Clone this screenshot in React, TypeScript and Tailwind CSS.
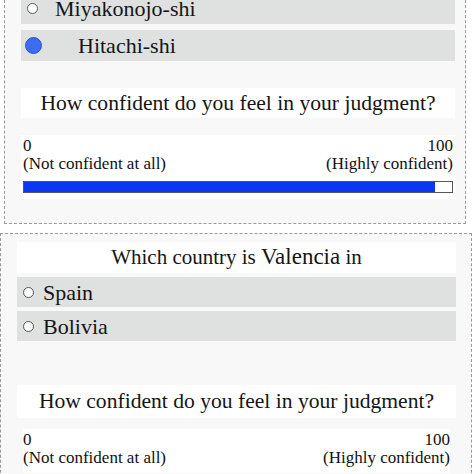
import React from 'react';

const serif = { fontFamily: '"Liberation Serif", "DejaVu Serif", serif' };

const Radio: React.FC<{ checked?: boolean }> = ({ checked }) =>
  checked ? (
    <span className="block w-[17px] h-[17px] rounded-full bg-[#3c6cf2] border border-[#2f55c8] shrink-0" />
  ) : (
    <span className="block w-[11px] h-[11px] rounded-full bg-white border border-[#555] shrink-0" />
  );

const Scale: React.FC<{ showBar?: boolean }> = ({ showBar }) => (
  <div className="bg-white pt-[2px] pb-[6px]">
    <div className="flex justify-between text-[17px] leading-[18px] text-[#111]">
      <div>
        <div>0</div>
        <div>(Not confident at all)</div>
      </div>
      <div className="text-right">
        <div>100</div>
        <div>(Highly confident)</div>
      </div>
    </div>
    {showBar && (
      <div className="mt-[8px] h-[12px] border border-[#555] bg-white flex">
        <div className="h-full bg-[#0a37f3] w-[96%]" />
      </div>
    )}
  </div>
);

export default function App() {
  return (
    <div className="w-[474px] h-[474px] overflow-hidden bg-white text-[#151515]" style={serif}>
      {/* first question, scrolled partly out of view */}
      <div className="ml-[4px] w-[462px] h-[224px] border border-dashed border-[#9a9a9a] border-t-0 bg-[#f8f8f8] pl-4 pr-[10px] overflow-hidden">
        <div className="-mt-[7px] flex flex-col gap-[6px]">
          <div className="h-[31px] bg-[#dfe1e1] flex items-center pl-[6px] gap-[17px] text-[22px]">
            <Radio />
            <span>Miyakonojo-shi</span>
          </div>
          <div className="h-[31px] bg-[#dfe1e1] flex items-center pl-[4px] gap-[36px] text-[22px]">
            <Radio checked />
            <span>Hitachi-shi</span>
          </div>
        </div>
        <div className="mt-[27px] h-[30px] bg-white flex items-center justify-center text-[21.6px]">
          How confident do you feel in your judgment?
        </div>
        <div className="mt-[17px] px-[2px] bg-white">
          <Scale showBar />
        </div>
      </div>

      {/* second question */}
      <div className="mt-[9px] w-[472px] h-[260px] border border-dashed border-[#9a9a9a] border-b-0 bg-[#f8f8f8] pl-[16px] pr-[15px] pt-[8px]">
        <div className="h-[31px] bg-white flex items-center justify-center text-[21px]">
          <span>
            Which country is <span className="text-[23px]">Valencia</span> in
          </span>
        </div>
        <div className="mt-[4px] flex flex-col gap-[4px]">
          <div className="h-[30px] bg-[#dfe1e1] flex items-center pl-[6px] gap-[9px] text-[22px]">
            <Radio />
            <span>Spain</span>
          </div>
          <div className="h-[30px] bg-[#dfe1e1] flex items-center pl-[6px] gap-[9px] text-[22px]">
            <Radio />
            <span>Bolivia</span>
          </div>
        </div>
        <div className="mt-[44px] h-[33px] bg-white flex items-center justify-center text-[21.6px]">
          How confident do you feel in your judgment?
        </div>
        <div className="mt-[11px] px-[6px]">
          <Scale />
        </div>
      </div>
    </div>
  );
}
